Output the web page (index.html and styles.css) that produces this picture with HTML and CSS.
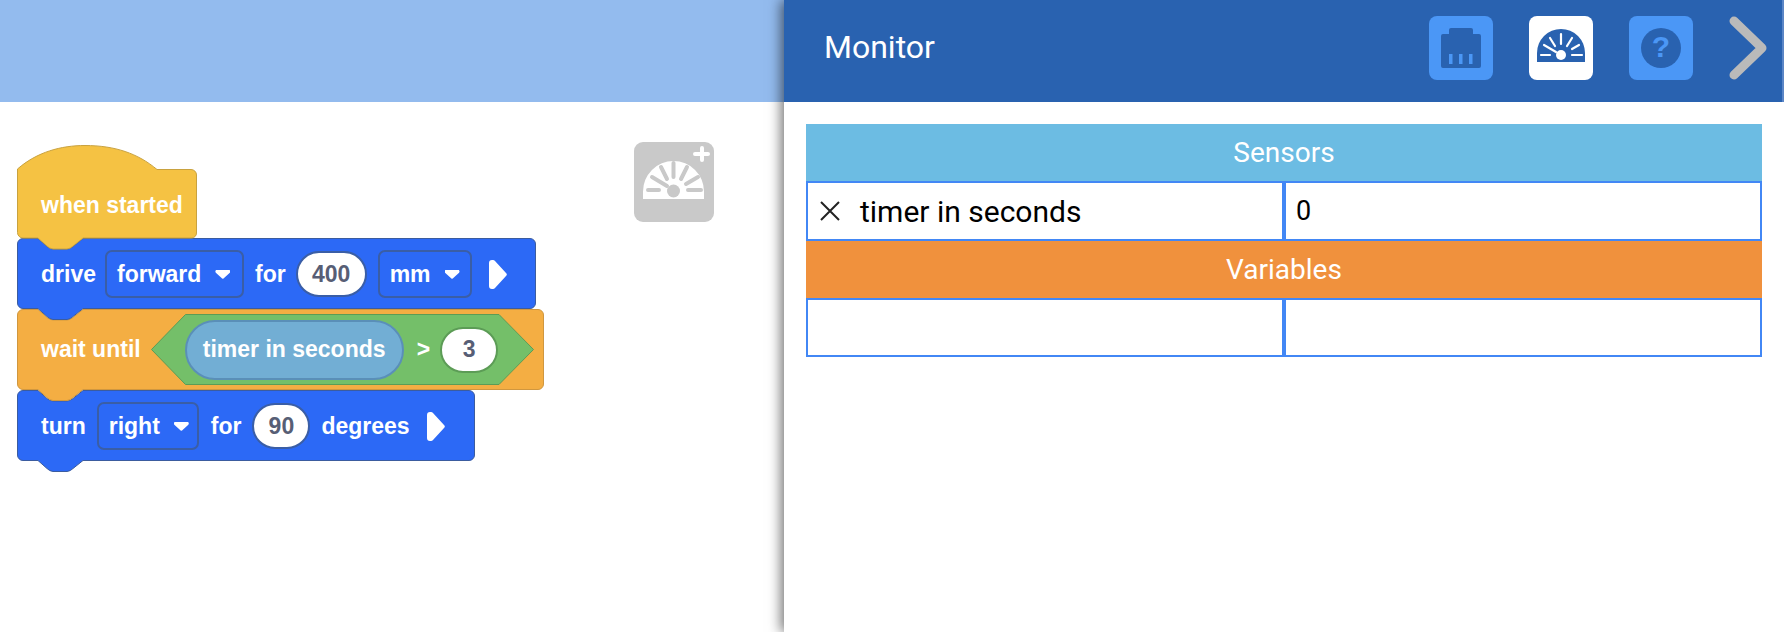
FILE: index.html
```html
<!DOCTYPE html>
<html lang="en">
<head>
<meta charset="utf-8">
<title>Monitor</title>
<link rel="stylesheet" href="styles.css">
</head>
<body>
<div class="app">
  <main class="workspace">
    <div class="topbar"></div>
    <div class="canvas">
      <div class="stack">
        <div class="block hat">
          <svg class="shape" width="180" height="105" viewBox="0 0 180 105"><path d="M.5 24C20 7 44 .5 68 .5c30 0 53 8 72 24h34a5.500 5.500 0 0 1 5.500 5.500V88a5 5 0 0 1-5 5H66l-10 8a10 10 0 0 1-6 3H36a10 10 0 0 1-6-3l-9-8H6a5.500 5.500 0 0 1-5.500-5.500Z" fill="#f5c243" stroke="#c9a23f"/></svg>
          <div class="row"><span>when started</span></div>
        </div>
        <div class="block motion drive">
          <svg class="shape" width="519" height="83" viewBox="0 0 519 83"><path d="M6 .5H21l9 8a10 10 0 0 0 6 2.500H50a10 10 0 0 0 6-2.500l10-8H513a5.500 5.500 0 0 1 5.500 5.500V65a5.500 5.500 0 0 1-5.500 5.500H66l-10 8a10 10 0 0 1-6 3H36a10 10 0 0 1-6-3l-9-8H6A5.500 5.500 0 0 1 .5 65V6A5.500 5.500 0 0 1 6 .5Z" fill="#2c69f6" stroke="#3b5c9f"/></svg>
          <div class="row">
            <span>drive</span>
            <span class="drop drop-forward">forward<i class="caret"></i></span>
            <span>for</span>
            <span class="pill pill-400">400</span>
            <span class="drop drop-mm">mm<i class="caret"></i></span>
            <svg class="play" width="18" height="29" viewBox="0 0 18 29"><path d="M3 0h1a3 3 0 0 1 2 1l11 12a2 2 0 0 1 0 3L6 28a3 3 0 0 1-2 1H3a3 3 0 0 1-3-3V3a3 3 0 0 1 3-3Z" fill="#fff"/></svg>
          </div>
        </div>
        <div class="block wait">
          <svg class="shape" width="527" height="93" viewBox="0 0 527 93"><path d="M6 .5H21l9 8a10 10 0 0 0 6 2.500H50a10 10 0 0 0 6-2.500l10-8H521a5.500 5.500 0 0 1 5.500 5.500V75a5.500 5.500 0 0 1-5.500 5.500H66l-10 8a10 10 0 0 1-6 3H36a10 10 0 0 1-6-3l-9-8H6A5.500 5.500 0 0 1 .5 75V6A5.500 5.500 0 0 1 6 .5Z" fill="#f4ae43" stroke="#d0973f"/></svg>
          <div class="row">
            <span>wait until</span>
            <div class="hex">
              <svg class="shape" width="383" height="71" viewBox="0 0 383 71"><path d="M.5 35.500 34.500 .5H348L382.500 35.500 348 70.500H34.500Z" fill="#74bf69" stroke="#5c9c56"/></svg>
              <span class="sensor">timer in seconds</span>
              <span class="op">&gt;</span>
              <span class="pill pill-3">3</span>
            </div>
          </div>
        </div>
        <div class="block motion turn">
          <svg class="shape" width="458" height="83" viewBox="0 0 458 83"><path d="M6 .5H21l9 8a10 10 0 0 0 6 2.500H50a10 10 0 0 0 6-2.500l10-8H452a5.500 5.500 0 0 1 5.500 5.500V65a5.500 5.500 0 0 1-5.500 5.500H66l-10 8a10 10 0 0 1-6 3H36a10 10 0 0 1-6-3l-9-8H6A5.500 5.500 0 0 1 .5 65V6A5.500 5.500 0 0 1 6 .5Z" fill="#2c69f6" stroke="#3b5c9f"/></svg>
          <div class="row">
            <span>turn</span>
            <span class="drop drop-right">right<i class="caret"></i></span>
            <span>for</span>
            <span class="pill pill-90">90</span>
            <span>degrees</span>
            <svg class="play" width="18" height="29" viewBox="0 0 18 29"><path d="M3 0h1a3 3 0 0 1 2 1l11 12a2 2 0 0 1 0 3L6 28a3 3 0 0 1-2 1H3a3 3 0 0 1-3-3V3a3 3 0 0 1 3-3Z" fill="#fff"/></svg>
          </div>
        </div>
      </div>
      <div class="add-monitor">
        <svg width="80" height="80" viewBox="0 0 80 80">
          <path d="M9 57V49.500A30.500 30.500 0 0 1 70 49.500V57Z" fill="#fff"/>
          <path d="M14 48H25M54 48H67M18 35L33 44M27 25L33 37M39.500 21V35M53 25L47 37M64 35L52 42" stroke="#c9c9c9" stroke-width="4" stroke-linecap="round" fill="none"/>
          <circle cx="39.500" cy="49" r="6.500" fill="#c9c9c9"/>
          <path d="M61 12H74M68 6V18" stroke="#fff" stroke-width="4" stroke-linecap="round"/>
        </svg>
      </div>
    </div>
  </main>
  <aside class="panel">
    <header class="panel-head">
      <h1 class="title">Monitor</h1>
      <div class="tools">
        <button class="tool">
          <svg width="64" height="64" viewBox="0 0 64 64">
            <path d="M22 12H42a2 2 0 0 1 2 2v4h6a2 2 0 0 1 2 2V50a2 2 0 0 1-2 2H14a2 2 0 0 1-2-2V20a2 2 0 0 1 2-2h6v-4a2 2 0 0 1 2-2Z" fill="#2962b0"/>
            <path d="M20 38h3.500v10H20ZM30 38h3.500v10H30ZM40 38h3.500v10H40Z" fill="#4b97f6"/>
          </svg>
        </button>
        <button class="tool active">
          <svg width="64" height="64" viewBox="0 0 64 64">
            <path d="M8 46V37A24 24 0 0 1 56 37V46Z" fill="#2962b0"/>
            <path d="M12 39H21M43 39H53M15 29L27 36M21 22L26 30M32 18V28M43 22L38 30M50 29L43 33" stroke="#fff" stroke-width="2.200" stroke-linecap="round" fill="none"/>
            <circle cx="32" cy="39" r="5" fill="#fff"/>
          </svg>
        </button>
        <button class="tool help">
          <svg class="help-disc" width="40" height="40" viewBox="0 0 40 40"><circle cx="20" cy="20" r="20" fill="#2962b0"/></svg>
          <span class="qmark">?</span>
        </button>
        <svg class="chev" width="38" height="64" viewBox="0 0 38 64"><path d="M5 5L33 32L5 59" fill="none" stroke="#bababa" stroke-width="9" stroke-linecap="round" stroke-linejoin="round"/></svg>
      </div>
    </header>
    <div class="panel-body">
      <div class="table">
        <div class="section sensors">Sensors</div>
        <div class="cell name">
          <svg class="close" width="20" height="20" viewBox="0 0 20 20"><path d="M1 1L19 19M19 1L1 19" stroke="#222" stroke-width="2"/></svg>
          <span>timer in seconds</span>
        </div>
        <div class="cell value">0</div>
        <div class="section variables">Variables</div>
        <div class="cell last"></div>
        <div class="cell last"></div>
      </div>
    </div>
  </aside>
</div>
</body>
</html>
```
FILE: styles.css
```css
* { box-sizing: border-box; }
html, body { margin: 0; padding: 0; background: #fff; }
body { width: 1784px; height: 632px; overflow: hidden; }
.app { display: flex; height: 632px; }

.workspace { width: 784px; flex: none; display: flex; flex-direction: column; }
.topbar { height: 102px; background: #93bbee; }
.canvas { flex: 1; display: flex; justify-content: space-between; align-items: flex-start; padding: 40px 70px 0 17px; }

.stack { display: flex; flex-direction: column; padding-top: 3px; }
.block { position: relative; font: bold 23px "Liberation Sans", Arial, sans-serif; color: #fff; }
.shape { position: absolute; left: 0; top: 0; overflow: visible; }
.row { position: relative; display: flex; align-items: center; padding-left: 24px; white-space: nowrap; }
.hat { width: 179px; height: 93px; z-index: 4; }
.hat .row { height: 93px; padding-top: 27px; }
.drive { width: 519px; height: 71px; z-index: 3; }
.wait { width: 527px; height: 81px; z-index: 2; }
.turn { width: 458px; height: 71px; z-index: 1; }
.motion .row { height: 71px; padding-top: 1px; }
.wait .row { height: 81px; }
.drop { display: flex; align-items: center; height: 48px; border: 2px solid #3a5ea6; border-radius: 7px; padding-left: 10px; background: #2c69f6; }
.caret { display: block; width: 15px; height: 9px; margin-left: 14px; background: #fff; clip-path: path('M2 0H13a2 2 0 0 1 1.500 3.300L9 8.300a2 2 0 0 1-3 0L.5 3.300A2 2 0 0 1 2 0Z'); }
.drive .row > span:nth-child(2) { margin-left: 9px; margin-right: 11px; }
.drop-forward { width: 139px; }
.pill { display: flex; align-items: center; justify-content: center; background: #fff; color: #575e75; border: 2px solid #3a5ea6; border-radius: 23px; height: 46px; }
.pill-400 { width: 71px; margin-left: 10px; margin-right: 11px; }
.drop-mm { width: 94px; }
.drive .play { margin-left: 17px; }
.hex { position: relative; display: flex; align-items: center; width: 383px; height: 71px; margin-left: 10px; padding-left: 34px; }
.sensor { position: relative; display: flex; align-items: center; justify-content: center; width: 219px; height: 60px; border-radius: 30px; background: #72aed4; border: 2px solid #5a8fb8; }
.op { position: relative; margin-left: 13px; }
.pill-3 { position: relative; width: 58px; margin-left: 10px; border-color: #5c9c56; }
.turn .row > span:nth-child(2) { margin-left: 11px; margin-right: 12px; }
.drop-right { width: 102px; }
.pill-90 { width: 58px; margin-left: 11px; margin-right: 11px; }
.turn .play { margin-left: 17px; }

.add-monitor { width: 80px; height: 80px; border-radius: 9px; background: #c9c9c9; }
.add-monitor svg { display: block; }

.panel { position: relative; z-index: 5; flex: 1; box-shadow: -3px 0 12px rgba(0,0,0,.55); background: #fff; font-family: Roboto, sans-serif; }
.panel-head { height: 102px; background: #2962b0; display: flex; align-items: center; justify-content: space-between; padding: 0 15px 6px 40px; border-right: 2px solid #5b86c6; }
.title { margin: 0 0 2px; font: 400 32px Roboto, sans-serif; color: #fff; }
.tools { display: flex; align-items: center; gap: 36px; }
.tool { position: relative; display: block; width: 64px; height: 64px; padding: 0; border: 0; border-radius: 8px; background: #4b97f6; }
.tool svg { display: block; }
.tool.active { background: #fff; }
.tool.help .help-disc { position: absolute; left: 12px; top: 12px; }
.qmark { position: absolute; left: 12px; top: 11px; width: 40px; height: 40px; display: flex; align-items: center; justify-content: center; font: bold 30px "Liberation Sans", sans-serif; color: #4b97f6; }
.chev { display: block; }

.panel-body { padding: 22px 22px 0; }
.table { display: grid; grid-template-columns: 1fr 1fr; width: 956px; }
.section { grid-column: 1 / -1; height: 57px; display: flex; align-items: center; justify-content: center; color: #fff; font-size: 28px; }
.variables { padding-bottom: 1px; }
.sensors { background: #6cbce3; }
.variables { background: #f0913d; }
.cell { height: 60px; border: 2px solid #4287f5; display: flex; align-items: center; gap: 20px; padding-left: 12px; font-size: 30px; color: #000; }
.cell.last { height: 59px; }
.value { font-size: 27px; padding-left: 10px; }
.close { flex: none; }
```
